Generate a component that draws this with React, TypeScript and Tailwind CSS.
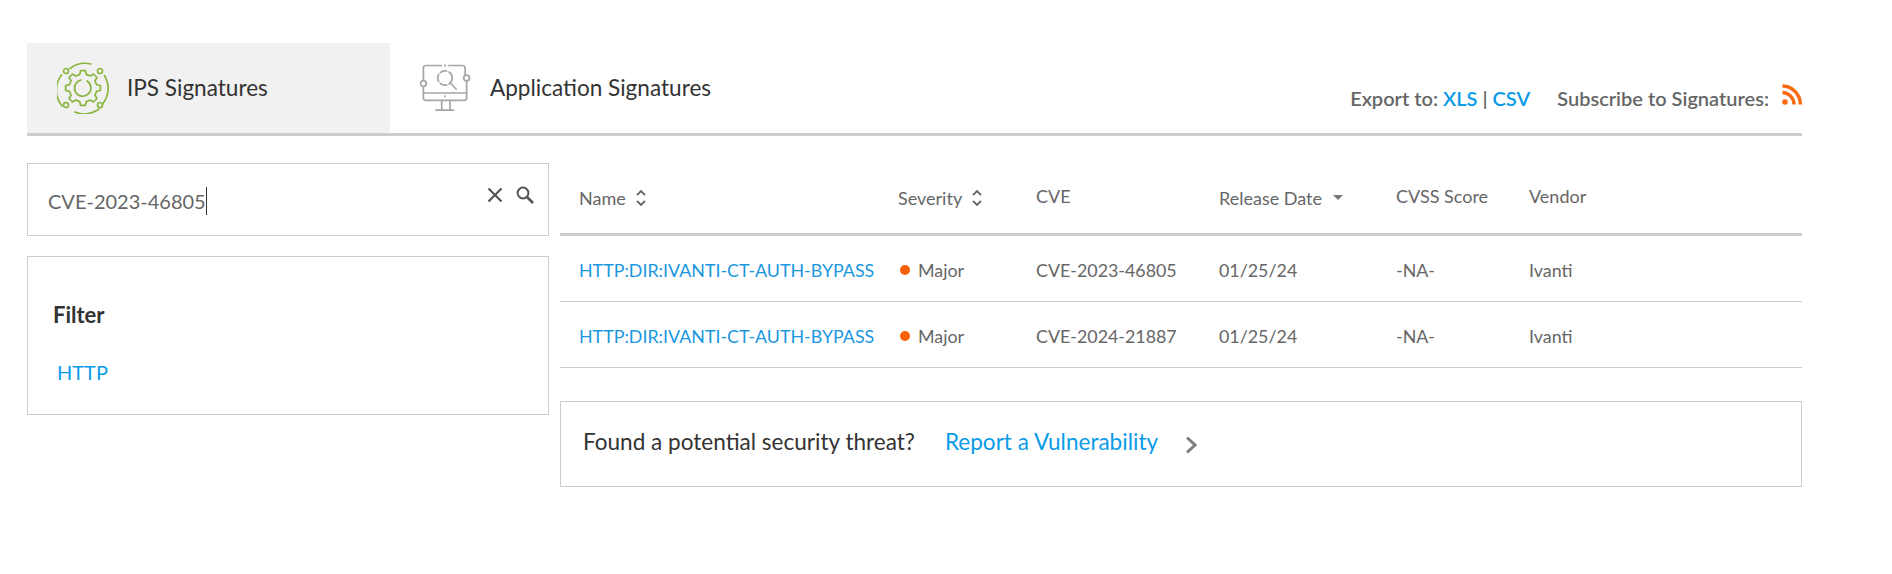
import React from "react";

const rows = [
  { name: "HTTP:DIR:IVANTI-CT-AUTH-BYPASS", severity: "Major", cve: "CVE-2023-46805", date: "01/25/24", score: "-NA-", vendor: "Ivanti" },
  { name: "HTTP:DIR:IVANTI-CT-AUTH-BYPASS", severity: "Major", cve: "CVE-2024-21887", date: "01/25/24", score: "-NA-", vendor: "Ivanti" },
];

const cols = "grid grid-cols-[318px_138px_183px_177px_133px_1fr] pl-5";

// gear outline for the IPS tab icon
function gearPoints() {
  const pts: string[] = [];
  const teeth = 8;
  for (let i = 0; i < teeth; i++) {
    const a = (i / teeth) * Math.PI * 2;
    const step = Math.PI / teeth;
    const corners: [number, number][] = [
      [14, a - step * 0.6],
      [17.5, a - step * 0.36],
      [17.5, a + step * 0.36],
      [14, a + step * 0.6],
    ];
    corners.forEach(([r, t]) => pts.push(`${(26 + r * Math.sin(t)).toFixed(2)},${(26 - r * Math.cos(t)).toFixed(2)}`));
  }
  return pts.join(" ");
}

function GearIcon() {
  return (
    <svg width="52" height="52" viewBox="0 0 52 52" fill="none" stroke="#8ab63f" strokeWidth="1.7" strokeLinecap="round" className="shrink-0">
      <path d="M13 6.5A25 25 0 0 1 34 2" />
      <path d="M47.5 13.5A25 25 0 0 1 46 41.5" />
      <path d="M42 47A25 25 0 0 1 18 50" />
      <path d="M5 44A25 25 0 0 1 4.5 13" />
      <circle cx="9" cy="9" r="2.5" />
      <circle cx="43" cy="9" r="2.5" />
      <circle cx="9" cy="43" r="2.5" />
      <circle cx="43" cy="43" r="2.5" />
      <polygon points={gearPoints()} strokeLinejoin="round" />
      <path d="M30 19A8.2 8.2 0 1 1 24 18" />
    </svg>
  );
}

function MonitorIcon() {
  return (
    <svg width="52" height="48" viewBox="0 0 52 48" fill="none" stroke="#a6a6a6" strokeWidth="1.7" strokeLinecap="round" className="shrink-0">
      <path d="M21.5 1.5H6a2.6 2.6 0 0 0-2.6 2.6V16" />
      <path d="M28.5 1.5H42.5a2.6 2.6 0 0 1 2.6 2.6V11" />
      <path d="M25 1v1" />
      <circle cx="3.4" cy="19.6" r="2.9" />
      <circle cx="46.6" cy="14" r="2.9" />
      <path d="M46.6 17V34a2.4 2.4 0 0 1-2.4 2.4H5.8A2.4 2.4 0 0 1 3.4 34V22.6" />
      <path d="M3.4 29H46.6" />
      <path d="M25 32v.5" />
      <path d="M21.7 36.4V46M30 36.4V46M16 46.2H33.5" />
      <circle cx="25" cy="14" r="7.2" strokeDasharray="7 2.5" />
      <path d="M30.5 19L36 25" />
    </svg>
  );
}

function SortIcon() {
  return (
    <svg width="10" height="18" viewBox="0 0 10 18" fill="none" stroke="#666666" strokeWidth="1.8" className="ml-[10px] shrink-0">
      <path d="M1 6L5 2L9 6" />
      <path d="M1 12L5 16L9 12" />
    </svg>
  );
}

function RssIcon() {
  return (
    <svg width="20" height="21" viewBox="0 0 20 21" fill="none" stroke="#f96a0f" strokeWidth="3.4" className="ml-[13px] mt-[1px] shrink-0">
      <circle cx="3" cy="18" r="2.8" fill="#f96a0f" stroke="none" />
      <path d="M0.5 8.5A12 12 0 0 1 12 20.5" />
      <path d="M0.5 2A18.2 18.2 0 0 1 18.3 20.5" />
    </svg>
  );
}

export default function App() {
  return (
    <div className="min-h-[574px] bg-white pl-[27px] pt-[43px] font-['Lato','Liberation_Sans',sans-serif] w-[1802px] [font-feature-settings:'liga','dlig']">
      <div className="flex h-[93px] items-stretch justify-between border-b-[3px] border-[#cccccc]">
        <div className="flex">
          <div className="flex w-[363px] items-center bg-[#f1f1f1] pl-[30px]">
            <GearIcon />
            <span className="ml-[18px] text-[22.55px] text-[#333333]">IPS Signatures</span>
          </div>
          <div className="flex items-center pl-[30px]">
            <MonitorIcon />
            <span className="ml-[18px] text-[22.55px] text-[#333333]">Application Signatures</span>
          </div>
        </div>
        <div className="flex items-start pt-[40px] text-[20px] font-semibold text-[#666666]">
          <span>
            Export to: <a className="text-[#0a9be8]">XLS</a> | <a className="text-[#0a9be8]">CSV</a>
          </span>
          <span className="ml-[27px]">Subscribe to Signatures:</span>
          <RssIcon />
        </div>
      </div>

      <div className="flex items-start gap-[11px]">
        <div className="w-[522px] shrink-0 pt-[27px]">
          <div className="flex h-[73px] items-center justify-between border border-[#cccccc] pl-5 pr-[14px] text-[#666666]">
            <div className="flex items-center pt-[3px]">
              <span className="text-[20px]">CVE-2023-46805</span>
              <span className="h-[28px] w-px bg-[#333333]" />
            </div>
            <div className="mb-[10px] flex items-center gap-[13px]">
              <svg width="16" height="16" viewBox="0 0 16 16" stroke="#555555" strokeWidth="2.2" fill="none">
                <path d="M1.5 1.5L14.5 14.5M14.5 1.5L1.5 14.5" />
              </svg>
              <svg width="18" height="18" viewBox="0 0 18 18" stroke="#555555" fill="none">
                <circle cx="7" cy="7" r="5.4" strokeWidth="2" />
                <path d="M11 11L17 17" strokeWidth="2.6" />
              </svg>
            </div>
          </div>
          <div className="mt-5 h-[159px] border border-[#cccccc] pl-[25px] pt-[44px]">
            <h3 className="text-[22px] font-bold leading-[28px] text-[#333333]">Filter</h3>
            <a className="ml-[4px] mt-[31px] block text-[20px] leading-[24px] text-[#0a9be8]">HTTP</a>
          </div>
        </div>

        <div className="flex-1">
          <div className={`${cols} h-[100px] items-center border-b-[3px] border-[#cccccc] pt-[27px] text-[18px] text-[#666666]`}>
            <div className="-ml-px flex items-center">Name<SortIcon /></div>
            <div className="flex items-center">Severity<SortIcon /></div>
            <div className="mb-[4px]">CVE</div>
            <div className="flex items-center">
              Release Date
              <svg width="10" height="5" viewBox="0 0 10 5" className="ml-[11px] mb-[2px]"><path d="M0 0H10L5 5Z" fill="#777777" /></svg>
            </div>
            <div className="mb-[4px]">CVSS Score</div>
            <div className="mb-[4px]">Vendor</div>
          </div>
          {rows.map((r) => (
            <div key={r.cve} className={`${cols} h-[66px] items-center border-b border-[#cccccc] pt-[3px] text-[17.85px] text-[#666666]`}>
              <a className="-ml-px text-[#1a97e0]">{r.name}</a>
              <div className="flex items-center">
                <span className="ml-[2px] mr-2 size-[10px] rounded-full bg-[#f95f06]" />
                {r.severity}
              </div>
              <div>{r.cve}</div>
              <div>{r.date}</div>
              <div>{r.score}</div>
              <div>{r.vendor}</div>
            </div>
          ))}
          <div className="mt-[33px] flex h-[86px] items-center border border-[#cccccc] pl-[22px] text-[22.55px]">
            <span className="mb-[4px] text-[#333333]">Found a potential security threat?</span>
            <a className="mb-[4px] ml-[30px] text-[#0a9be8]">Report a Vulnerability</a>
            <svg width="12" height="18" viewBox="0 0 12 18" fill="none" stroke="#7f7f7f" strokeWidth="3" className="ml-[27px] mt-[1px]">
              <path d="M2 1.5L10 9L2 16.5" />
            </svg>
          </div>
        </div>
      </div>
    </div>
  );
}
